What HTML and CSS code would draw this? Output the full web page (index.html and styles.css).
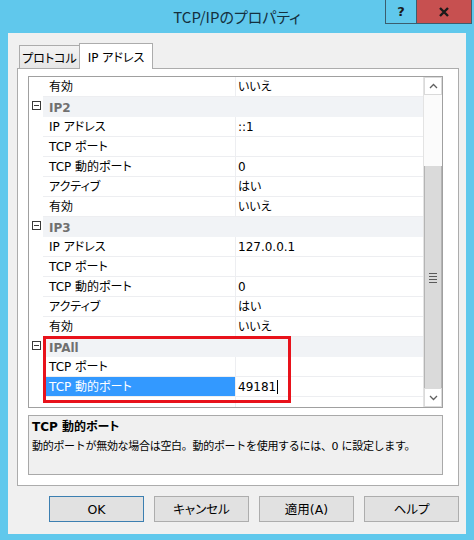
FILE: index.html
```html
<!DOCTYPE html>
<html>
<head>
    <title>TCP/IPのプロパティ</title>
    <link rel="stylesheet" href="styles.css">
</head>
<body>
    <div class="window">
        <div class="titlebar">
            <div></div>
            <div class="title">TCP/IPのプロパティ</div>
            <div class="caption">
                <div class="cap-btn cap-help">?</div>
                <div class="cap-btn cap-close">
                    <svg width="10" height="10" viewBox="0 0 10 10"><path d="M1 1 L9 9 M9 1 L1 9" stroke="#1b1b1b" stroke-width="2.4" fill="none"/></svg>
                </div>
            </div>
        </div>

        <div class="client">
            <div class="tabs">
                <div class="tab">プロトコル</div>
                <div class="tab active">IP アドレス</div>
            </div>

            <div class="tab-panel">
                <div class="grid">
                    <div class="rows">
                        <div class="row"><div class="gutter"></div><div class="label">有効</div><div class="value">いいえ</div></div>

                        <div class="row cat"><div class="gutter"><span class="toggle"></span></div><div class="cat-name">IP2</div></div>
                        <div class="row"><div class="gutter"></div><div class="label">IP アドレス</div><div class="value">::1</div></div>
                        <div class="row"><div class="gutter"></div><div class="label">TCP ポート</div><div class="value"></div></div>
                        <div class="row"><div class="gutter"></div><div class="label">TCP 動的ポート</div><div class="value">0</div></div>
                        <div class="row"><div class="gutter"></div><div class="label">アクティブ</div><div class="value">はい</div></div>
                        <div class="row"><div class="gutter"></div><div class="label">有効</div><div class="value">いいえ</div></div>

                        <div class="row cat"><div class="gutter"><span class="toggle"></span></div><div class="cat-name">IP3</div></div>
                        <div class="row"><div class="gutter"></div><div class="label">IP アドレス</div><div class="value">127.0.0.1</div></div>
                        <div class="row"><div class="gutter"></div><div class="label">TCP ポート</div><div class="value"></div></div>
                        <div class="row"><div class="gutter"></div><div class="label">TCP 動的ポート</div><div class="value">0</div></div>
                        <div class="row"><div class="gutter"></div><div class="label">アクティブ</div><div class="value">はい</div></div>
                        <div class="row"><div class="gutter"></div><div class="label">有効</div><div class="value">いいえ</div></div>

                        <div class="row cat"><div class="gutter"><span class="toggle"></span></div><div class="cat-name">IPAll</div></div>
                        <div class="row"><div class="gutter"></div><div class="label">TCP ポート</div><div class="value"></div></div>
                        <div class="row selected"><div class="gutter"></div><div class="label">TCP 動的ポート</div><div class="value"><span class="caret">49181</span></div></div>
                        <div class="row"><div class="gutter"></div><div class="label"></div><div class="value"></div></div>
                    </div>

                    <div class="scrollbar">
                        <div class="sb-arrow">
                            <svg width="9" height="6" viewBox="0 0 9 6"><path d="M1 5 L4.5 1.5 L8 5" stroke="#606060" stroke-width="1.3" fill="none"/></svg>
                        </div>
                        <div class="sb-track"></div>
                        <div class="sb-thumb">
                            <svg width="8" height="11" viewBox="0 0 8 11"><path d="M0 1.5 H8 M0 4.5 H8 M0 7.5 H8 M0 10.5 H8" stroke="#5a5a5a" stroke-width="1"/></svg>
                        </div>
                        <div class="sb-arrow sb-down">
                            <svg width="9" height="6" viewBox="0 0 9 6"><path d="M1 1 L4.5 4.5 L8 1" stroke="#606060" stroke-width="1.3" fill="none"/></svg>
                        </div>
                    </div>

                    <!-- red frame drawn over the IPAll group -->
                    <div class="highlight"></div>
                </div>

                <div class="desc">
                    <div class="desc-title">TCP 動的ポート</div>
                    <div class="desc-text">動的ポートが無効な場合は空白。動的ポートを使用するには、0 に設定します。</div>
                </div>
            </div>

            <div class="buttons">
                <div class="btn default">OK</div>
                <div class="btn">キャンセル</div>
                <div class="btn">適用(A)</div>
                <div class="btn">ヘルプ</div>
            </div>
        </div>
    </div>
</body>
</html>
```

FILE: styles.css
```css
body {
    margin: 0;
    padding: 0;
    font-family: "DejaVu Sans", "Noto Sans CJK JP", sans-serif;
    font-size: 12px;
    font-feature-settings: "palt" 1;
    color: #000;
}

.window {
    width: 474px;
    height: 540px;
    background: #60c8ec;
    display: flex;
    flex-direction: column;
}

/* title bar */
.titlebar {
    height: 33px;
    display: grid;
    grid-template-columns: 1fr auto 1fr;
    align-items: start;
}

.title {
    font-family: "Noto Sans CJK JP", sans-serif;
    font-size: 15px;
    line-height: 34px;
    color: #14303e;
}

.caption {
    justify-self: end;
    display: flex;
    margin-right: 2px;
}

.cap-btn {
    height: 24px;
    box-sizing: border-box;
    border: 1px solid #3b5d6e;
    border-top: none;
    display: flex;
    align-items: center;
    justify-content: center;
}

.cap-help {
    width: 31px;
    border-right: none;
    font-weight: bold;
    font-size: 13px;
    color: #1b1b1b;
}

.cap-close {
    width: 56px;
    background: #c75050;
}

/* client area */
.client {
    flex: 1;
    margin: 0 8px 6px 8px;
    background: #f0f0f0;
    padding: 10px 7px 12px 9px;
    display: flex;
    flex-direction: column;
}

.tabs {
    height: 25px;
    display: flex;
    align-items: flex-end;
    padding-left: 2px;
}

.tab {
    width: 61px;
    height: 23px;
    box-sizing: border-box;
    border: 1px solid #acacac;
    border-bottom: none;
    background: linear-gradient(#f3f3f3, #e6e6e6);
    text-align: center;
    padding-top: 2px;
    line-height: 22px;
}

.tab.active {
    width: 74px;
    height: 26px;
    margin-left: -1px;
    margin-bottom: -1px;
    background: #fff;
    position: relative;
    z-index: 1;
    line-height: 24px;
}

.tab-panel {
    height: 418px;
    box-sizing: border-box;
    border: 1px solid #acacac;
    background: #fff;
    padding: 7px 15px 10px 10px;
    display: flex;
    flex-direction: column;
    gap: 7px;
}

/* property grid */
.grid {
    height: 332px;
    box-sizing: border-box;
    border: 1px solid #a0a0a0;
    display: flex;
    position: relative;
}

.rows {
    flex: 1;
    overflow: hidden;
}

.row {
    height: 20px;
    display: grid;
    grid-template-columns: 14px 192px 1fr;
}

.gutter {
    background: #fff;
}

.label,
.value {
    box-sizing: border-box;
    border-bottom: 1px solid #edeef1;
    padding-top: 2px;
    line-height: 17px;
    white-space: nowrap;
}

.label {
    padding-left: 6px;
}

.value {
    border-left: 1px solid #edeef1;
    padding-left: 2px;
}

.row.cat .cat-name {
    grid-column: 2 / 4;
    background: #f1f3f6;
    padding: 2px 0 0 6px;
    line-height: 18px;
    font-weight: bold;
    color: #707070;
}

.toggle {
    display: block;
    width: 9px;
    height: 9px;
    box-sizing: border-box;
    margin: 4px 0 0 3px;
    border: 1px solid #3a3a3a;
    position: relative;
}

.toggle:after {
    content: "";
    position: absolute;
    left: 1px;
    right: 1px;
    top: 3px;
    height: 1px;
    background: #3a3a3a;
}

.row.selected .label {
    background: #3399ff;
    color: #fff;
}

.caret {
    border-right: 1px solid #000;
    padding-right: 1px;
}

.scrollbar {
    width: 18px;
    display: flex;
    flex-direction: column;
    background: #fbfbfb;
    border-left: 1px solid #e3e3e3;
}

.sb-arrow {
    height: 18px;
    box-sizing: border-box;
    border: 1px solid #dadada;
    background: #fff;
    display: flex;
    align-items: center;
    justify-content: center;
}

.sb-down {
    height: 19px;
}

.sb-track {
    height: 71px;
}

.sb-thumb {
    flex: 1;
    background: #dadada;
    border-left: 1px solid #b4b4b4;
    border-right: 1px solid #b4b4b4;
    display: flex;
    align-items: center;
    justify-content: center;
}

.highlight {
    position: absolute;
    left: 14px;
    top: 259px;
    width: 248px;
    height: 67px;
    box-sizing: border-box;
    border: 3px solid #e8121b;
}

/* description pane */
.desc {
    height: 60px;
    box-sizing: border-box;
    border: 1px solid #a9a9a9;
    background: #f0f0f0;
    padding: 1px 3px;
    line-height: 20px;
}

.desc-title {
    font-weight: bold;
}

.desc-text {
    font-size: 11px;
    font-feature-settings: normal;
    letter-spacing: -0.3px;
}

/* dialog buttons */
.buttons {
    margin-top: 10px;
    display: flex;
    justify-content: flex-end;
    gap: 10px;
}

.btn {
    width: 95px;
    height: 26px;
    box-sizing: border-box;
    border: 1px solid #adadad;
    background: #e1e1e1;
    text-align: center;
    padding-top: 1px;
    line-height: 24px;
    font-size: 12.5px;
}

.btn.default {
    border-color: #3c7fb1;
}
```
